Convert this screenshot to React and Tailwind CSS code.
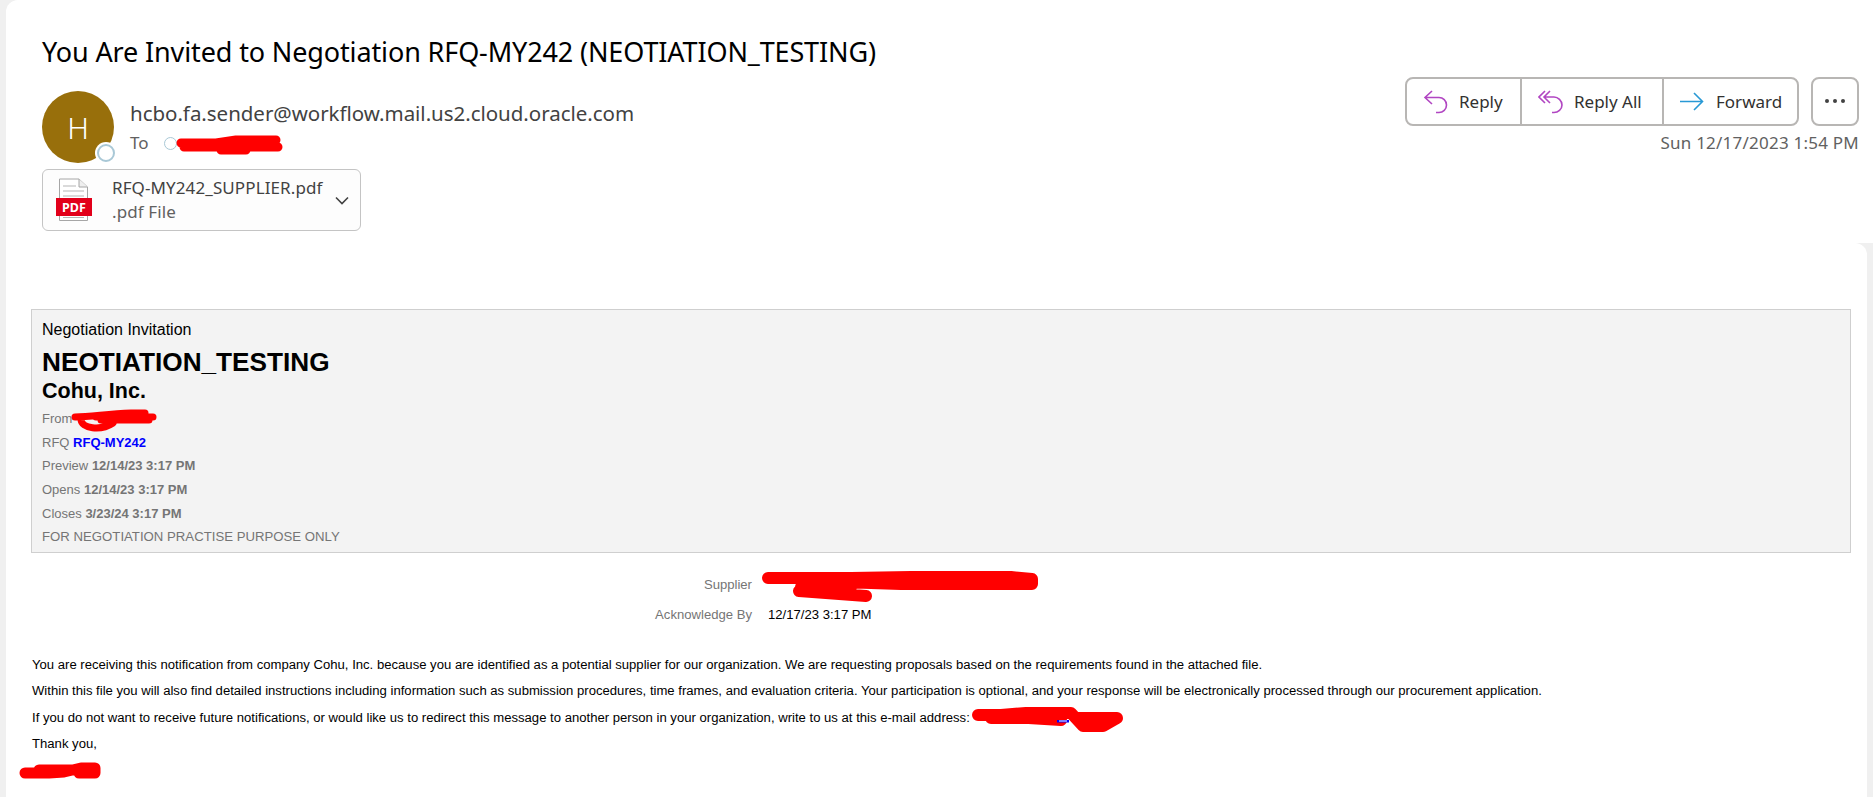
import React from 'react';

const uiFont = 'font-["Noto_Sans",sans-serif]';

const ReplyIcon = () => (
  <svg width="25" height="25" viewBox="0 0 25 25" fill="none" stroke="#b146c2" strokeWidth="1.6">
    <path d="M9 2 L2 8.5 L9 15 M2 8.5 H16 C20 8.5 23.5 11.5 23.5 16 C23.5 20.5 20 23.5 16 23.5 H13" />
  </svg>
);

const ReplyAllIcon = () => (
  <svg width="25" height="25" viewBox="0 0 25 25" fill="none" stroke="#b146c2" strokeWidth="1.6">
    <path d="M7 2 L1 8 L7 14 M12 2 L6 8 L12 14 M6 8 H16 C20 8 24 11.5 24 16 C24 20.5 20 23.5 16 23.5 H14" />
  </svg>
);

const ForwardIcon = () => (
  <svg width="24" height="25" viewBox="0 0 24 25" fill="none" stroke="#2899d5" strokeWidth="1.6">
    <path d="M0 12.5 H22.5 M14 4 L22.5 12.5 L14 21" />
  </svg>
);

const PdfIcon = () => (
  <svg width="37" height="44" viewBox="0 0 37 44" className="shrink-0">
    <path d="M4.5 1 H24 L32.5 9 V42.5 H4.5 Z" fill="#fff" stroke="#a6a6a6" />
    <path d="M24 1 V9 H32.5" fill="#efefef" stroke="#a6a6a6" />
    <path d="M8 8 H21 M8 13 H29 M8 18 H29 M8 36 H29 M8 39.5 H29" stroke="#b5b5b5" />
    <rect x="1" y="20" width="36" height="18" fill="#e2001a" />
    <text x="19" y="33.5" textAnchor="middle" fontSize="12.5" fontWeight="700" fill="#fff" fontFamily="Noto Sans, sans-serif">PDF</text>
  </svg>
);

const Scribble = ({ w, h, d, sw, className = '', children }) => (
  <svg width={w} height={h} viewBox={`0 0 ${w} ${h}`} fill="none" stroke="#ff0000" strokeWidth={sw} strokeLinecap="round" strokeLinejoin="round" className={`inline-block shrink-0 ${className}`}>
    <path d={d} />
    {children}
  </svg>
);

const Meta = ({ label, value }) => (
  <div className="h-[23.7px] leading-[23.7px] text-[13px] text-[#757575]">
    {label} <span className="font-bold">{value}</span>
  </div>
);

const ActionButton = ({ icon, label, className }) => (
  <div className={`flex items-center h-full ${className}`}>
    {icon}
    <span className="text-[17px] text-[#323130]">{label}</span>
  </div>
);

export default function App() {
  return (
    <div className="h-[797px] w-[1873px] overflow-hidden bg-[#f0f0f0] flex flex-col">
      {/* message header */}
      <div className={`ml-[6px] h-[243px] shrink-0 bg-white rounded-tl-xl ${uiFont}`}>
        <h1 className="ml-[36px] pt-[32px] h-[91px] text-[27px] leading-[40px] text-black tracking-[-0.13px] font-normal">
          You Are Invited to Negotiation RFQ-MY242 (NEOTIATION_TESTING)
        </h1>

        <div className="flex justify-between">
          <div className="ml-[36px]">
            <div className="flex h-[78px]">
              <div className="relative w-[72px] h-[72px] rounded-full bg-[#986f0b] flex items-center justify-center text-white text-[30px] font-light">
                H
                <div className="absolute right-[-3px] bottom-[-1px] w-[22px] h-[22px] rounded-full bg-white flex items-center justify-center">
                  <div className="w-[18px] h-[18px] rounded-full border-2 border-[#a9c8d6]" />
                </div>
              </div>
              <div className="ml-[16px]">
                <div className="h-[40px] pt-[7px] text-[20.5px] leading-[30px] text-[#424242] tracking-[-0.03px]">
                  hcbo.fa.sender@workflow.mail.us2.cloud.oracle.com
                </div>
                <div className="flex items-center h-[22px] mt-[1px]">
                  <span className="text-[17px] text-[#616161]">To</span>
                  <div className="ml-[15px] w-[13px] h-[13px] rounded-full border border-[#a9c8d6]" />
                  <Scribble w={108} h={22} sw={9} className="ml-[-1px] mt-[4px]" d="M5 9 H40 L60 6 H100 M8 13 H102 M45 16 H70" />
                </div>
              </div>
            </div>

            <div className="flex items-center w-[319px] h-[62px] border border-[#c4c4c4] rounded-md bg-[#fdfdfd] pl-[12px]">
              <PdfIcon />
              <div className="ml-[20px] text-[17px] leading-[24px] text-[#424242] tracking-[0.1px]">
                <div>RFQ-MY242_SUPPLIER.pdf</div>
                <div className="text-[#616161]">.pdf File</div>
              </div>
              <svg width="14" height="9" viewBox="0 0 14 9" fill="none" stroke="#424242" strokeWidth="1.6" className="ml-[13px]">
                <path d="M1 1.5 L7 7.5 L13 1.5" />
              </svg>
            </div>
          </div>

          <div className="mr-[14px] mt-[-14px] flex flex-col items-end">
            <div className="flex gap-[12px]">
              <div className="flex h-[49px] w-[394px] border-2 border-[#b8b6b4] rounded-lg bg-white">
                <ActionButton icon={<ReplyIcon />} label="Reply" className="w-[115px] pl-[16px] gap-[11px] border-r-2 border-[#b8b6b4]" />
                <ActionButton icon={<ReplyAllIcon />} label="Reply All" className="w-[142px] pl-[16px] gap-[11px] border-r-2 border-[#b8b6b4]" />
                <ActionButton icon={<ForwardIcon />} label="Forward" className="flex-1 pl-[16px] gap-[12px]" />
              </div>
              <div className="flex items-center justify-center gap-[4px] w-[48px] h-[49px] border-2 border-[#b8b6b4] rounded-lg bg-white pb-[2px]">
                <span className="w-[4px] h-[4px] rounded-full bg-[#424242]" />
                <span className="w-[4px] h-[4px] rounded-full bg-[#424242]" />
                <span className="w-[4px] h-[4px] rounded-full bg-[#424242]" />
              </div>
            </div>
            <div className="mt-[5px] text-[17px] leading-[24px] text-[#616161] tracking-[0.23px]">Sun 12/17/2023 1:54 PM</div>
          </div>
        </div>
      </div>

      {/* message body */}
      <div className="ml-[6px] mr-[6px] flex-1 bg-white rounded-tr-xl pt-[66px] font-['Liberation_Sans',Arial,sans-serif]">
        <div className="ml-[25px] mr-[16px] h-[244px] border border-[#cfcfcf] bg-[#f3f3f3] pl-[10px] pt-[9px]">
          <div className="text-[16px] leading-[22px] text-black">Negotiation Invitation</div>
          <div className="text-[26.2px] leading-[30px] mt-[6px] font-bold text-black">NEOTIATION_TESTING</div>
          <div className="text-[21.5px] leading-[24px] mt-[2px] font-bold text-black">Cohu, Inc.</div>
          <div className="h-[23.7px] mt-[4px] flex items-center text-[13px] text-[#757575]">
            From
            <Scribble w={86} h={24} sw={7} className="ml-[-1px] mt-[4px]" d="M4 8 C20 8 35 5 60 4 H74 M25 8 H82 M30 11 H78 M10 10 C10 20 30 22 42 14" />
          </div>
          <div className="h-[23.7px] leading-[23.7px] text-[13px] text-[#757575]">
            RFQ <a className="font-bold text-[#0000ff]">RFQ-MY242</a>
          </div>
          <Meta label="Preview" value="12/14/23 3:17 PM" />
          <Meta label="Opens" value="12/14/23 3:17 PM" />
          <Meta label="Closes" value="3/23/24 3:17 PM" />
          <div className="h-[23.7px] leading-[23.7px] text-[13.2px] text-[#757575]">FOR NEGOTIATION PRACTISE PURPOSE ONLY</div>
        </div>

        <div className="mt-[17px] h-[59px] text-[13.12px]">
          <div className="flex items-center h-[30px]">
            <div className="w-[746px] text-right text-[#757575]">Supplier</div>
            <Scribble w={278} h={32} sw={12} className="ml-[9px] mt-[2px]" d="M7 8 H90 L150 7 H250 L271 9 V14 L140 14 L80 12 M40 17 H90 M38 21 L105 26" />
          </div>
          <div className="flex items-center h-[29px]">
            <div className="w-[746px] text-right text-[#757575]">Acknowledge By</div>
            <div className="ml-[16px] text-black">12/17/23 3:17 PM</div>
          </div>
        </div>

        <div className="mt-[23px] ml-[26px] text-[13.12px] leading-[26.3px] text-black">
          <p>You are receiving this notification from company Cohu, Inc. because you are identified as a potential supplier for our organization. We are requesting proposals based on the requirements found in the attached file.</p>
          <p>Within this file you will also find detailed instructions including information such as submission procedures, time frames, and evaluation criteria. Your participation is optional, and your response will be electronically processed through our procurement application.</p>
          <p className="flex items-center h-[26.3px]">
            If you do not want to receive future notifications, or would like us to redirect this message to another person in your organization, write to us at this e-mail address:
            <Scribble w={155} h={28} sw={12} className="ml-[1px] mt-[4px]" d="M7 9 H30 L55 7 H100 L112 20 H122 M20 12 H90 M105 12 H146 L132 20 H122 M40 11 L90 14">
              <rect x="86" y="14" width="12" height="2.5" fill="#0000ff" stroke="none" />
              <rect x="88" y="14.5" width="8" height="1" fill="#ffffff" stroke="none" />
            </Scribble>
          </p>
          <p>Thank you,</p>
          <Scribble w={82} h={18} sw={11} className="ml-[-13px] mt-[-1px] block" d="M6 12 H30 L45 11 L62 7 H76 V12 M20 9 H60 M60 12 H76" />
        </div>
      </div>
    </div>
  );
}
